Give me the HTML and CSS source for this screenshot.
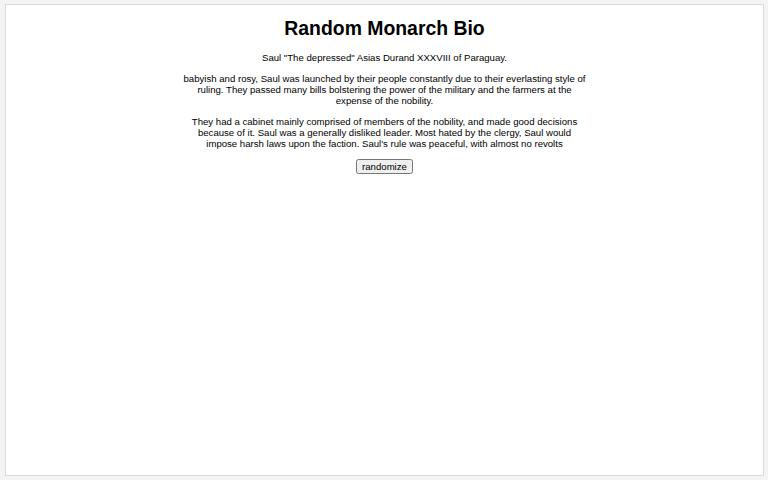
FILE: index.html
```html
<!DOCTYPE html>
<html lang="en">
<head>
    <meta charset="UTF-8">
    <meta name="viewport" content="width=device-width, initial-scale=1.0">
    <title>Random Monarch Bio</title>
    <link rel="stylesheet" href="styles.css">
</head>
<body>
    <div class="page">
        <h1>Random Monarch Bio</h1>
        <div class="bio">
            <p>Saul "The depressed" Asias Durand XXXVIII of Paraguay.</p>
            <p>babyish and rosy, Saul was launched by their people constantly due to their everlasting style of ruling. They passed many bills bolstering the power of the military and the farmers at the expense of the nobility.</p>
            <p>They had a cabinet mainly comprised of members of the nobility, and made good decisions because of it. Saul was a generally disliked leader. Most hated by the clergy, Saul would impose harsh laws upon the faction. Saul's rule was peaceful, with almost no revolts</p>
        </div>
        <button class="randomize">randomize</button>
    </div>
</body>
</html>
```

FILE: styles.css
```css
body {
    margin: 0;
    background: #f3f3f3;
    font-family: "Liberation Sans", Arial, sans-serif;
    font-size: 9.6px;
    color: #000;
}
.page {
    margin: 4px 4px 4px 5px;
    height: calc(100vh - 10px);
    background: #fff;
    border: 1px solid #dcdcdc;
    text-align: center;
    overflow: hidden;
}
h1 {
    font-size: 19.4px;
    margin: 12px 0;
}
.bio {
    max-width: 404px;
    margin: 0 auto;
}
.bio p {
    margin: 10px 0;
}
.randomize {
    font: inherit;
    padding: 0 4px;
    margin-top: 0;
}
```
